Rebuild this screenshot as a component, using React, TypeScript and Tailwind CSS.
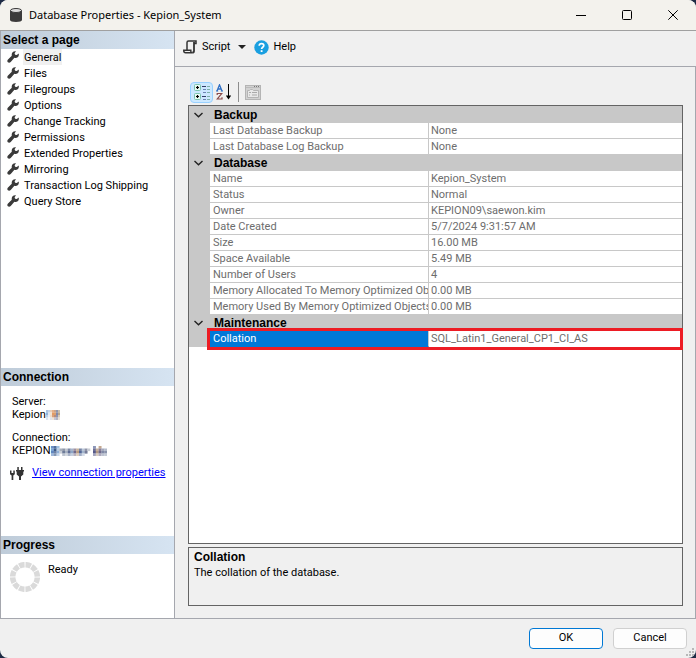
import React from 'react';

interface Property {
  name: string;
  value: string;
  selected?: boolean;
}

interface PropertyGroup {
  title: string;
  items: Property[];
}

const pages = [
  'General',
  'Files',
  'Filegroups',
  'Options',
  'Change Tracking',
  'Permissions',
  'Extended Properties',
  'Mirroring',
  'Transaction Log Shipping',
  'Query Store',
];

const groups: PropertyGroup[] = [
  {
    title: 'Backup',
    items: [
      { name: 'Last Database Backup', value: 'None' },
      { name: 'Last Database Log Backup', value: 'None' },
    ],
  },
  {
    title: 'Database',
    items: [
      { name: 'Name', value: 'Kepion_System' },
      { name: 'Status', value: 'Normal' },
      { name: 'Owner', value: 'KEPION09\\saewon.kim' },
      { name: 'Date Created', value: '5/7/2024 9:31:57 AM' },
      { name: 'Size', value: '16.00 MB' },
      { name: 'Space Available', value: '5.49 MB' },
      { name: 'Number of Users', value: '4' },
      { name: 'Memory Allocated To Memory Optimized Objects', value: '0.00 MB' },
      { name: 'Memory Used By Memory Optimized Objects', value: '0.00 MB' },
    ],
  },
  {
    title: 'Maintenance',
    items: [{ name: 'Collation', value: 'SQL_Latin1_General_CP1_CI_AS', selected: true }],
  },
];

// One row of colours per line of blocks, '' leaves a gap
const serverMask = [
  ['#a9c4e4', '#c3d3e6', '#e8cdb4', '#e6b088', '#c9a58c', '#8f95ad', '#c9bfae'],
  ['#8fb2dc', '#dfe9f3', '#f3e4d3', '#e39a62', '#dca06e', '#7f88aa', '#b9a68c'],
  ['#b9d0ea', '#e9eef5', '#f0dcc8', '#d8a07a', '#b98d7c', '#8c93b0', '#d8cbb8'],
  ['#dbe6f3', '#f4f6fa', '#dfe4ec', '#f1e3d6', '#c3c6d4', '#b2b4c4', '#e9e2d8'],
];

const loginMask = [
  ['#6d8fc4', '#4f6f9e', '#9fc0e0', '', '', '', '', '', '', '', '', '', '', '', '', '#8d97b8', '', '#c5a890', '', ''],
  ['#7fa6d6', '#3d5a86', '#b7cde4', '#a8b0bc', '#8d96a8', '#c0c6d0', '#7c89a6', '#a5b5cc', '#9d92a4', '#c9b49c', '#7583a4', '#b9c6d8', '#8f94a8', '#c8ccd4', '', '#6b6f98', '#c8b09a', '#8a7f98', '#a3a8bc', '#b4bccb'],
  ['#5f86c0', '#6c7fa2', '#8fb0d8', '#c9ced6', '#6e7c98', '#a6b0c0', '#5e6c94', '#8ea6c6', '#6f6a8c', '#b89a80', '#546898', '#a2b4cc', '#757c98', '', '', '#55598a', '#b09884', '#6f6a8c', '#8089a6', '#8a93ac'],
  ['#9db8dc', '#8598b4', '#c4d6ea', '', '#bcc4d0', '#d4d9e0', '#a9b4c8', '#c4d0e0', '#b8b2c0', '#dccdbd', '#a4b0c8', '#d4dce8', '', '', '', '#a3a5c0', '#d8ccc0', '#aeaabe', '#bcc2d0', '#c4cad6'],
];

function Mask({ rows, width }: { rows: string[][]; width: number }) {
  return (
    <svg width={width} height="10" viewBox={`0 0 ${rows[0].length} 4`} preserveAspectRatio="none" aria-hidden="true">
      {rows.map((row, y) => row.map((c, x) => c && <rect key={`${x}-${y}`} x={x} y={y} width="1.05" height="1.05" fill={c} />))}
    </svg>
  );
}

function DatabaseIcon() {
  return (
    <svg width="14" height="16" viewBox="0 0 14 16" aria-hidden="true">
      <path d="M1 3.500v9.500c0 1.300 2.500 2 6 2s6-.7 6-2V3.500z" fill="#3b3b3b" />
      <ellipse cx="7" cy="3.500" rx="5.500" ry="2" fill="#dcdcdc" stroke="#3b3b3b" />
    </svg>
  );
}

function WrenchIcon() {
  return (
    <svg width="12" height="12" viewBox="0 0 12 12" aria-hidden="true">
      <path d="M9 .300 7.600 2.200l.5 1.600 1.700.3 1.900-1.500c.4 1.700 0 2.900-1 3.700-.9.7-2.200.9-3.300.5L3.700 11c-.8.9-2 1-2.800.3-.8-.8-.8-2 .1-2.800L4.800 4.700C4.500 3.400 4.800 2.100 5.800 1.100 6.700.300 7.800 0 9 .300z" fill="#3a3a3a" />
    </svg>
  );
}

function ScriptIcon() {
  return (
    <svg width="15" height="14" viewBox="0 0 15 14" fill="none" stroke="#333" aria-hidden="true">
      <path d="M4 10V2.500C4 1.500 4.500 1 5.500 1H13v2.500h-2" strokeWidth="1.500" />
      <path d="M11 2v9c0 1.200-.7 1.700-1.900 1.700" strokeWidth="1.800" />
      <path d="M.8 10.300h7v1c0 .9.500 1.400 1.200 1.400H2.600C1.400 12.700.8 12 .8 11z" strokeWidth="1.500" />
    </svg>
  );
}

function HelpIcon() {
  return (
    <svg width="15" height="15" viewBox="0 0 15 15" fill="none" aria-hidden="true">
      <circle cx="7.500" cy="7.500" r="7.200" fill="#1a9fe0" />
      <path d="M5.200 5.800c0-1.300 1-2.200 2.300-2.200s2.300.8 2.300 2c0 1.600-2.200 1.700-2.200 3.300" stroke="#fff" strokeWidth="1.700" />
      <rect x="6.700" y="10.200" width="1.800" height="1.800" fill="#fff" />
    </svg>
  );
}

function CategorizedIcon() {
  return (
    <svg width="16" height="16" viewBox="0 0 16 16" aria-hidden="true">
      {[0, 9].map((y) => (
        <g key={y}>
          <rect x=".5" y={y + 0.5} width="6" height="6" rx="1" fill="#e9fbf4" stroke="#7cc4ae" />
          <path d={`M2 ${y + 3.500}h3M3.500 ${y + 2}v3`} stroke="#000" strokeWidth="1.200" />
        </g>
      ))}
      <path d="M8 2.500h4M8 12.500h4" stroke="#333b66" />
      <path d="M9 5.500h3M9 8.500h3M9 15.500h3" stroke="#6d84b4" />
      <path d="M13 2.500h3M13 5.500h3M13 8.500h3M13 12.500h3M13 15.500h3" stroke="#7cb0a8" />
    </svg>
  );
}

function SortIcon() {
  return (
    <svg width="16" height="16" viewBox="0 0 16 16" fill="none" aria-hidden="true">
      <path d="M1 7 3.500.8 6 7M2 5h3" stroke="#2f6fc4" strokeWidth="1.300" />
      <path d="M0 7h2.200M4.800 7H7" stroke="#2f6fc4" />
      <path d="M1.200 9.500h4.500L1.300 15H6M1.200 9v2M6 13.300V15.500" stroke="#8a4a4a" strokeWidth="1.200" />
      <path d="M12.500 0v13" stroke="#000" />
      <path d="M9.800 11.500h5.400L12.500 15.500z" fill="#000" />
    </svg>
  );
}

function PropertyPagesIcon() {
  return (
    <svg width="16" height="15" viewBox="0 0 16 15" fill="none" aria-hidden="true">
      <rect x=".5" y=".5" width="15" height="14" fill="#d2d2d2" stroke="#b4b4b4" />
      <path d="M1 2.500h14" stroke="#bbb" />
      <path d="M9 1.500h1M11 1.500h1M13 1.500h1" stroke="#777" />
      <path d="M2.500 5.500h2l1-1h2l1 1h5v7h-11z" fill="#e8e8e8" stroke="#b4b4b4" />
      <path d="M4 7.500h2M4 10h1M7 7.500h5M7 10h5" stroke="#aaa" />
    </svg>
  );
}

function PlugIcon() {
  return (
    <svg width="15" height="15" viewBox="0 0 15 15" aria-hidden="true">
      <path d="M0 4.500h1.500v2.500h1.800V4.500H4.800v3.700L3.300 9.500V14H1.600V9.500L0 8.200z" fill="#333" />
      <path d="M7.300 1h1.500v3H11V1h1.500v3H14v1.500h-.7v3L11 10.500V14H9v-3.500L6.700 8.500v-3H6V4h1.300z" fill="#333" />
    </svg>
  );
}

function ProgressRing() {
  return (
    <svg width="30" height="30" viewBox="0 0 30 30" fill="none" aria-hidden="true">
      {Array.from({ length: 12 }, (_, i) => (
        <path key={i} d="M15.500 2.700a12.300 12.300 0 0 1 5.300 1.400" stroke="#dadada" strokeWidth="5.500" transform={`rotate(${i * 30} 15 15)`} />
      ))}
    </svg>
  );
}

function Heading({ children }: { children: React.ReactNode }) {
  return (
    <h2 className="h-[18px] bg-linear-to-r from-[#bfccd9] to-[#d6e4f2] pl-[2px] font-['Liberation_Sans',sans-serif] text-[12px] leading-[18px] font-bold">
      {children}
    </h2>
  );
}

function TitleBar() {
  return (
    <header className="flex h-[31px] items-center border-b border-[#a0a0a0] bg-[#f3f2ed] pl-[9px]">
      <DatabaseIcon />
      <h1 className="ml-[6px] flex-1 font-['Noto_Sans','Open_Sans',sans-serif] text-[11px]">
        Database Properties - Kepion_System
      </h1>
      <div className="flex h-full">
        <button aria-label="Minimize" className="flex w-[46px] items-center justify-center">
          <svg width="10" height="10"><path d="M0 5.500h10" stroke="#000" /></svg>
        </button>
        <button aria-label="Maximize" className="flex w-[46px] items-center justify-center">
          <svg width="10" height="10"><rect x=".5" y=".5" width="9" height="9" rx="1" fill="none" stroke="#000" /></svg>
        </button>
        <button aria-label="Close" className="flex w-[46px] items-center justify-center">
          <svg width="10" height="10"><path d="M.3.300l9.400 9.400M9.700.300.300 9.700" stroke="#000" /></svg>
        </button>
      </div>
    </header>
  );
}

function Sidebar() {
  return (
    <aside className="flex w-[175px] shrink-0 flex-col border-x border-[#a5a7ae] bg-white">
      <Heading>Select a page</Heading>
      <ul className="flex-1">
        {pages.map((page, i) => (
          <li key={page} className="flex h-4 items-center pl-[6px]">
            <WrenchIcon />
            <button className={i === 0 ? 'ml-[4px] bg-[#f0f0f0] px-px pt-px leading-[15px]' : 'ml-[4px] px-px pt-px leading-[15px]'}>
              {page}
            </button>
          </li>
        ))}
      </ul>

      <section className="h-[168px]">
        <Heading>Connection</Heading>
        <dl className="pt-[9px] pl-[11px] leading-[13px]">
          <dt>Server:</dt>
          <dd className="mb-[10px] flex items-center">Kepion<Mask rows={serverMask} width={14} /></dd>
          <dt>Connection:</dt>
          <dd className="flex items-center">KEPION<Mask rows={loginMask} width={56} /></dd>
        </dl>
        <div className="mt-[8px] flex items-center pl-[9px]">
          <PlugIcon />
          <a href="#connection" className="ml-[7px] text-[#0000ff] underline">View connection properties</a>
        </div>
      </section>

      <section className="h-[82px]">
        <Heading>Progress</Heading>
        <div className="flex pt-[8px] pl-[9px]">
          <ProgressRing />
          <span className="ml-2 leading-[15px]">Ready</span>
        </div>
      </section>
    </aside>
  );
}

function PropertyGrid() {
  return (
    <div className="flex-1 border border-[#646464] bg-white">
      <table className="w-full table-fixed border-separate border-spacing-0 border-t border-[#c8c8c8] text-[#6d6d6d]">
        <colgroup>
          <col className="w-[21px]" />
          <col className="w-[219px]" />
          <col />
        </colgroup>
        {groups.map((group) => (
          <tbody key={group.title}>
            <tr className="h-4 bg-[#c8c8c8]">
              <td className="p-0">
                <button aria-label={`Collapse ${group.title}`} className="flex h-4 w-full items-center pl-[5px]">
                  <svg width="9" height="6" fill="none"><path d="M.500 1l4 3.800L8.500 1" stroke="#222" strokeWidth="1.400" /></svg>
                </button>
              </td>
              <th colSpan={2} className="p-0 pl-1 text-left font-['Liberation_Sans',sans-serif] text-[12px] leading-4 font-bold text-black">{group.title}</th>
            </tr>
            {group.items.map((item) => (
              <tr key={item.name} className="relative h-4">
                <td className="bg-[#c8c8c8] p-0">
                  {item.selected && <span className="absolute -top-[3px] -right-px -bottom-[3px] left-[18px] border-3 border-[#ed1c24]" />}
                </td>
                <td
                  className={
                    item.selected
                      ? 'border-r border-b border-r-[#c8c8c8] border-b-[#0078d7] bg-[#0078d7] p-0 pl-[3px] leading-[15px] text-white'
                      : 'overflow-hidden border-r border-b border-[#c8c8c8] p-0 pl-[3px] leading-[15px] whitespace-nowrap'
                  }
                >
                  {item.name}
                </td>
                <td className={item.selected ? 'border-b border-white p-0 pl-[2px] leading-[15px]' : 'border-b border-[#c8c8c8] p-0 pl-[2px] leading-[15px]'}>
                  {item.value}
                </td>
              </tr>
            ))}
          </tbody>
        ))}
      </table>
    </div>
  );
}

export default function App() {
  return (
    <div className="min-h-screen bg-[#1d2b45] font-['Roboto',sans-serif] text-[11px] text-black">
      <div className="flex min-h-screen flex-col overflow-hidden rounded-lg bg-[#f0f0f0]">
        <TitleBar />
        <div className="flex flex-1 border-b border-[#a5a7ae]">
          <Sidebar />
          <main className="flex min-w-0 flex-1 flex-col">
            <div className="flex h-9 items-center border-b border-[#a5a7ae] pb-[3px] pl-2">
              <button className="flex items-center">
                <ScriptIcon />
                <span className="ml-1">Script</span>
                <svg width="8" height="4" className="ml-[8px]"><path d="M0 0h8L4 4z" fill="#222" /></svg>
              </button>
              <button className="ml-2 flex items-center">
                <HelpIcon />
                <span className="ml-1">Help</span>
              </button>
            </div>
            <div className="flex flex-1 flex-col border-r border-[#a5a7ae] pt-[14px] pr-3 pb-3 pl-[13px]">
              <div className="mb-[2px] flex h-[22px] items-center pl-[2px]">
                <button aria-label="Categorized" className="flex h-[21px] w-[23px] items-center justify-center rounded-sm border border-[#99d1ff] bg-[#cce8ff]">
                  <CategorizedIcon />
                </button>
                <button aria-label="Alphabetical" className="ml-[3px]"><SortIcon /></button>
                <span className="ml-[6px] h-5 w-px bg-[#8d8d8d]" />
                <button aria-label="Property pages" disabled className="ml-[6px]"><PropertyPagesIcon /></button>
              </div>
              <PropertyGrid />
              <section className="mt-[3px] h-[59px] border border-[#646464] px-[5px] pt-[2px]">
                <h3 className="font-['Liberation_Sans',sans-serif] text-[12px] leading-[15px] font-bold">Collation</h3>
                <p className="leading-[15px]">The collation of the database.</p>
              </section>
            </div>
          </main>
        </div>
        <footer className="relative flex h-[39px] items-center justify-end gap-[10px] pr-[9px]">
          <button className="h-[21px] w-[74px] rounded border border-[#0078d4] bg-[#fdfdfd]">OK</button>
          <button className="h-[21px] w-[74px] rounded border border-[#d0d0d0] bg-[#fdfdfd]">Cancel</button>
          <svg width="8" height="8" className="absolute right-[2px] bottom-[2px]" fill="#b8b8b8" aria-hidden="true">
            <path d="M6 0h2v2H6zM3 3h2v2H3zM6 3h2v2H6zM0 6h2v2H0zM3 6h2v2H3zM6 6h2v2H6z" />
          </svg>
        </footer>
      </div>
    </div>
  );
}
